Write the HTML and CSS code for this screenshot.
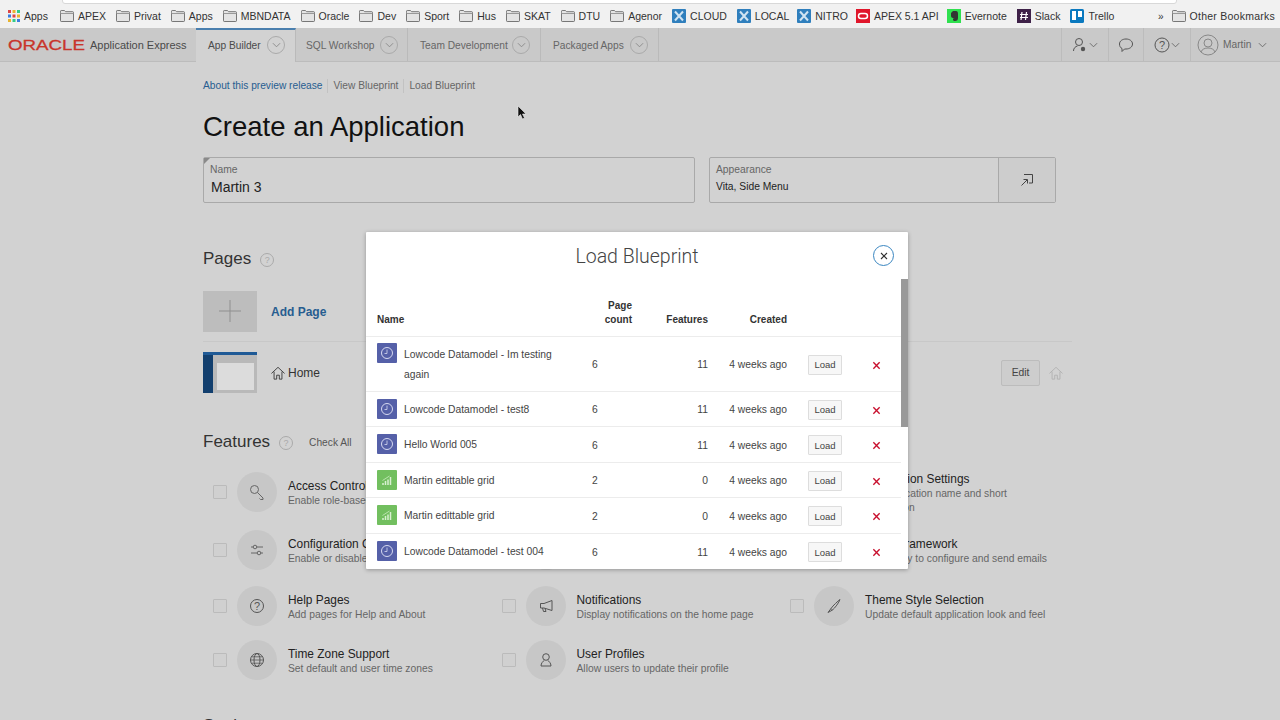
FILE: index.html
```html
<!DOCTYPE html>
<html lang="en">
<head>
<meta charset="utf-8">
<title>Create an Application</title>
<link rel="stylesheet" href="styles.css">
</head>
<body>
<svg class="defs" width="0" height="0" aria-hidden="true">
  <symbol id="folder" viewBox="0 0 14 12"><path d="M.5 2.500V1.200c0-.4.3-.7.7-.7h3.300l1 1.200h7.300c.4 0 .7.3.7.7v8.400c0 .4-.3.7-.7.7H1.200c-.4 0-.7-.3-.7-.7z" fill="#e4e4e4" stroke="#777"/><path d="M.5 3.500h13" stroke="#999"/></symbol>
  <symbol id="chev" viewBox="0 0 10 6"><path d="M1 1l4 4 4-4" fill="none" stroke="currentColor" stroke-width="1"/></symbol>
  <symbol id="home" viewBox="0 0 16 16"><path d="M.5 8.500L8 1.500l7.500 7M3.500 6.500v8.500h3v-4.500h3V15h3V6.500" fill="none" stroke="currentColor"/></symbol>
  <symbol id="x" viewBox="0 0 10 10"><path d="M1.500 1.500l7 7M8.500 1.500l-7 7" fill="none" stroke="#c8102e" stroke-width="1.500"/></symbol>
  <symbol id="clock" viewBox="0 0 20 20"><circle cx="10" cy="10" r="5.500" fill="none" stroke="#d6d9f0"/><path d="M10 6.500V10.500H7.500" fill="none" stroke="#d6d9f0" stroke-width=".8"/></symbol>
  <symbol id="bars" viewBox="0 0 20 20"><path d="M6 15v-2M8.500 15v-4M11 15V9.500M13.500 15V7" stroke="#d8f0d0" stroke-width="1.500"/><path d="M5.500 10.500l7-4.500" stroke="#d8f0d0" stroke-width=".7"/></symbol>
  <symbol id="xapp" viewBox="0 0 14 14"><rect width="14" height="14" rx="1" fill="#2f7fbd"/><path d="M3 2.500l8 9M11 2.500l-8 9" stroke="#cfe3f2" stroke-width="2"/></symbol>
</svg>

<header class="bookmarks">
  <div class="address"></div>
  <a class="bm first"><svg class="ic13" viewBox="0 0 12 12"><g><rect x="0" y="0" width="3" height="3" fill="#d44"/><rect x="4.500" y="0" width="3" height="3" fill="#e8b32e"/><rect x="9" y="0" width="3" height="3" fill="#3c8"/><rect x="0" y="4.500" width="3" height="3" fill="#3a7de0"/><rect x="4.500" y="4.500" width="3" height="3" fill="#d44"/><rect x="9" y="4.500" width="3" height="3" fill="#e8b32e"/><rect x="0" y="9" width="3" height="3" fill="#e8b32e"/><rect x="4.500" y="9" width="3" height="3" fill="#3c8"/><rect x="9" y="9" width="3" height="3" fill="#3a7de0"/></g></svg>Apps</a>
  <a class="bm f"><svg class="ic14"><use href="#folder"/></svg>APEX</a>
  <a class="bm f"><svg class="ic14"><use href="#folder"/></svg>Privat</a>
  <a class="bm f"><svg class="ic14"><use href="#folder"/></svg>Apps</a>
  <a class="bm f"><svg class="ic14"><use href="#folder"/></svg>MBNDATA</a>
  <a class="bm f"><svg class="ic14"><use href="#folder"/></svg>Oracle</a>
  <a class="bm f"><svg class="ic14"><use href="#folder"/></svg>Dev</a>
  <a class="bm f"><svg class="ic14"><use href="#folder"/></svg>Sport</a>
  <a class="bm f"><svg class="ic14"><use href="#folder"/></svg>Hus</a>
  <a class="bm f"><svg class="ic14"><use href="#folder"/></svg>SKAT</a>
  <a class="bm f"><svg class="ic14"><use href="#folder"/></svg>DTU</a>
  <a class="bm f"><svg class="ic14"><use href="#folder"/></svg>Agenor</a>
  <a class="bm"><svg class="ic14"><use href="#xapp"/></svg>CLOUD</a>
  <a class="bm tight"><svg class="ic14"><use href="#xapp"/></svg>LOCAL</a>
  <a class="bm tight"><svg class="ic14"><use href="#xapp"/></svg>NITRO</a>
  <a class="bm tight"><svg class="ic14" viewBox="0 0 14 14"><rect width="14" height="14" fill="#e0162b"/><rect x="2.500" y="4.500" width="9" height="5" rx="2.500" fill="none" stroke="#fff" stroke-width="1.500"/></svg>APEX 5.1 API</a>
  <a class="bm"><svg class="ic14" viewBox="0 0 14 14"><rect width="14" height="14" fill="#2fe04f"/><path d="M4 4l2-2h3c1.500 0 2 1 2 3v4c0 2-1 3-3 3-1 0-2-.5-2-1.500S7 9 8 9.500C6 9 4 9 4 7z" fill="#333"/></svg>Evernote</a>
  <a class="bm"><svg class="ic14" viewBox="0 0 14 14"><rect width="14" height="14" fill="#3e2148"/><path d="M5 3l-1 8M9.500 3l-1 8M3 5.500h8M3 8.500h8" stroke="#fff" stroke-width="1.200"/></svg>Slack</a>
  <a class="bm"><svg class="ic14" viewBox="0 0 14 14"><rect width="14" height="14" rx="1.500" fill="#0a79bf"/><rect x="2" y="2" width="4" height="9" fill="#fff"/><rect x="8" y="2" width="4" height="6" fill="#fff"/></svg>Trello</a>
  <span class="more">»</span>
  <a class="bm f last"><svg class="ic14"><use href="#folder"/></svg>Other Bookmarks</a>
</header>

<nav class="nav">
  <div class="brand">
    <svg class="logo" width="78" height="14" viewBox="0 0 78 14"><text x="0" y="12" textLength="77" lengthAdjust="spacingAndGlyphs" class="logo-text">ORACLE</text></svg>
    <span>Application Express</span>
  </div>
  <a class="tab active w100">App Builder<span class="tab-chev"><svg class="ic8"><use href="#chev"/></svg></span></a>
  <a class="tab w112">SQL Workshop<span class="tab-chev"><svg class="ic8"><use href="#chev"/></svg></span></a>
  <a class="tab w133">Team Development<span class="tab-chev"><svg class="ic8"><use href="#chev"/></svg></span></a>
  <a class="tab w118">Packaged Apps<span class="tab-chev"><svg class="ic8"><use href="#chev"/></svg></span></a>
  <div class="nav-right">
    <a class="nav-btn w47"><svg class="ic16" viewBox="0 0 16 16"><circle cx="7" cy="5" r="3.500" fill="none" stroke="#555"/><path d="M1.500 14c0-3 2-4.500 4-5" fill="none" stroke="#555"/><circle cx="11" cy="12" r="2.200" fill="#555"/></svg><svg class="ic8"><use href="#chev"/></svg></a>
    <a class="nav-btn w35"><svg class="ic16" viewBox="0 0 16 16"><path d="M8 2c3.600 0 6.500 2 6.500 5S11.600 12 8 12H6.500L4 14.500V11.500C2.300 10.700 1.500 9 1.500 7 1.500 4 4.400 2 8 2z" fill="none" stroke="#555"/></svg></a>
    <a class="nav-btn w47"><svg class="ic16" viewBox="0 0 16 16"><circle cx="8" cy="8" r="7" fill="none" stroke="#555"/><text x="8" y="11.500" class="qmark">?</text></svg><svg class="ic8"><use href="#chev"/></svg></a>
    <a class="nav-btn user"><svg class="avatar" viewBox="0 0 22 22"><circle cx="11" cy="11" r="10" fill="none" stroke="#888"/><circle cx="11" cy="9" r="4" fill="none" stroke="#888"/><path d="M4 18c1-3 4-4 7-4s6 1 7 4" fill="none" stroke="#888"/></svg><span>Martin</span><svg class="ic8 ml8"><use href="#chev"/></svg></a>
  </div>
</nav>

<main class="main">
  <div class="links">
    <a class="link-blue">About this preview release</a>
    <a>View Blueprint</a>
    <a>Load Blueprint</a>
  </div>
  <h1>Create an Application</h1>

  <div class="fields">
    <div class="field name-field">
      <label>Name</label>
      <div class="value">Martin 3</div>
    </div>
    <div class="field appearance">
      <div class="app-main">
        <label>Appearance</label>
        <div class="value small">Vita, Side Menu</div>
      </div>
      <button class="app-btn"><svg class="ic14" viewBox="0 0 14 14"><path d="M4 1.500h8.500v8.500H9" fill="none" stroke="#444"/><path d="M1.500 12.500L7 7M3.500 6.500H7.500V10.500" fill="none" stroke="#444"/></svg></button>
    </div>
  </div>

  <h2 class="section pages">Pages <span class="help">?</span></h2>
  <div class="page-row add">
    <div class="tile"><svg class="plus" viewBox="0 0 22 22"><path d="M11 0v22M0 11h22" stroke="#8f8f8f"/></svg></div>
    <a class="add-link">Add Page</a>
  </div>
  <div class="page-row home-row">
    <div class="thumb"><div class="thumb-top"></div><div class="thumb-side"></div><div class="thumb-body"></div></div>
    <div class="home-name"><svg class="ic14"><use href="#home"/></svg>Home</div>
    <button class="edit">Edit</button>
    <svg class="ic14 home-off"><use href="#home"/></svg>
  </div>

  <div class="features-head">
    <h2 class="section">Features <span class="help">?</span></h2>
    <a class="check-all">Check All</a>
  </div>

  <div class="features">
    <div class="feature"><span class="cb"></span><span class="circle"><svg class="ic16" viewBox="0 0 16 16"><circle cx="5.500" cy="5.500" r="4" fill="none" stroke="#666"/><path d="M8.500 8.500l5.500 5.500v1.500h-2.500l-1-1" fill="none" stroke="#666"/></svg></span><div class="ft"><b>Access Control</b><small>Enable role-based authentication</small></div></div>
    <div class="feature"><span class="cb"></span><span class="circle"></span><div class="ft"><b>Activity Reporting</b><small>Include usage reports</small></div></div>
    <div class="feature"><span class="cb"></span><span class="circle"></span><div class="ft"><b>Application Settings</b><small>Set application name and short<br>description</small></div></div>

    <div class="feature"><span class="cb"></span><span class="circle"><svg class="ic16" viewBox="0 0 16 16"><path d="M2 5h12M2 11h12" stroke="#666"/><circle cx="6" cy="5" r="1.800" fill="#c7c7c7" stroke="#666"/><circle cx="10" cy="11" r="1.800" fill="#c7c7c7" stroke="#666"/></svg></span><div class="ft"><b>Configuration Options</b><small>Enable or disable features</small></div></div>
    <div class="feature"><span class="cb"></span><span class="circle"></span><div class="ft"><b>Feedback</b><small>Provide a mechanism for feedback</small></div></div>
    <div class="feature"><span class="cb"></span><span class="circle"></span><div class="ft"><b>Email Framework</b><small>Add ability to configure and send emails</small></div></div>

    <div class="feature"><span class="cb"></span><span class="circle"><svg class="ic16" viewBox="0 0 16 16"><circle cx="8" cy="8" r="6.500" fill="none" stroke="#555"/><text x="8" y="11.500" class="qmark">?</text></svg></span><div class="ft"><b>Help Pages</b><small>Add pages for Help and About</small></div></div>
    <div class="feature"><span class="cb"></span><span class="circle"><svg class="ic16" viewBox="0 0 16 16"><path d="M14 2.500v10L6 10H2.500V5.500H6z" fill="none" stroke="#555"/><path d="M4.500 10l1 3.500H8L7 10.500" fill="none" stroke="#555"/></svg></span><div class="ft"><b>Notifications</b><small>Display notifications on the home page</small></div></div>
    <div class="feature"><span class="cb"></span><span class="circle"><svg class="ic16" viewBox="0 0 16 16"><path d="M14 1.500C12 3 7 7.500 5 10.500L6.500 12C9 10 13 4.500 14 1.500zM5 10.500L2 14.500 6.500 12" fill="none" stroke="#555"/></svg></span><div class="ft"><b>Theme Style Selection</b><small>Update default application look and feel</small></div></div>

    <div class="feature"><span class="cb"></span><span class="circle"><svg class="ic16" viewBox="0 0 16 16"><circle cx="8" cy="8" r="6.500" fill="none" stroke="#555"/><ellipse cx="8" cy="8" rx="3" ry="6.500" fill="none" stroke="#555"/><path d="M1.500 8h13M2.500 4.800h11M2.500 11.200h11" stroke="#555" stroke-width=".8"/></svg></span><div class="ft"><b>Time Zone Support</b><small>Set default and user time zones</small></div></div>
    <div class="feature"><span class="cb"></span><span class="circle"><svg class="ic16" viewBox="0 0 16 16"><circle cx="8" cy="5" r="3.300" fill="none" stroke="#555"/><path d="M3 14c0-3 2-4.500 3.500-6M13 14c0-3-2-4.500-3.500-6M3 14h10" fill="none" stroke="#555"/></svg></span><div class="ft"><b>User Profiles</b><small>Allow users to update their profile</small></div></div>
  </div>
  <h2 class="section settings">Settings</h2>
</main>

<section class="modal">
  <header class="modal-head">
    <h3>Load Blueprint</h3>
    <button class="close"><svg class="ic8" viewBox="0 0 8 8"><path d="M1 1l6 6M7 1L1 7" stroke="#333" stroke-width="1.100"/></svg></button>
  </header>
  <div class="modal-body">
    <table class="bp">
      <thead>
        <tr><th class="c-name">Name</th><th class="c-count">Page<br>count</th><th class="c-feat">Features</th><th class="c-created">Created</th><th class="c-load"></th><th class="c-del"></th></tr>
      </thead>
      <tbody>
        <tr class="tall"><td class="c-name"><div class="nm"><svg class="ico indigo"><use href="#clock"/></svg><span>Lowcode Datamodel - Im testing again</span></div></td><td class="n-count">6</td><td class="c-feat">11</td><td class="c-created">4 weeks ago</td><td class="c-load"><button class="load">Load</button></td><td class="c-del"><svg class="del"><use href="#x"/></svg></td></tr>
        <tr><td class="c-name"><div class="nm"><svg class="ico indigo"><use href="#clock"/></svg><span>Lowcode Datamodel - test8</span></div></td><td class="n-count">6</td><td class="c-feat">11</td><td class="c-created">4 weeks ago</td><td class="c-load"><button class="load">Load</button></td><td class="c-del"><svg class="del"><use href="#x"/></svg></td></tr>
        <tr><td class="c-name"><div class="nm"><svg class="ico indigo"><use href="#clock"/></svg><span>Hello World 005</span></div></td><td class="n-count">6</td><td class="c-feat">11</td><td class="c-created">4 weeks ago</td><td class="c-load"><button class="load">Load</button></td><td class="c-del"><svg class="del"><use href="#x"/></svg></td></tr>
        <tr><td class="c-name"><div class="nm"><svg class="ico green"><use href="#bars"/></svg><span>Martin edittable grid</span></div></td><td class="n-count">2</td><td class="c-feat">0</td><td class="c-created">4 weeks ago</td><td class="c-load"><button class="load">Load</button></td><td class="c-del"><svg class="del"><use href="#x"/></svg></td></tr>
        <tr><td class="c-name"><div class="nm"><svg class="ico green"><use href="#bars"/></svg><span>Martin edittable grid</span></div></td><td class="n-count">2</td><td class="c-feat">0</td><td class="c-created">4 weeks ago</td><td class="c-load"><button class="load">Load</button></td><td class="c-del"><svg class="del"><use href="#x"/></svg></td></tr>
        <tr><td class="c-name"><div class="nm"><svg class="ico indigo"><use href="#clock"/></svg><span>Lowcode Datamodel - test 004</span></div></td><td class="n-count">6</td><td class="c-feat">11</td><td class="c-created">4 weeks ago</td><td class="c-load"><button class="load">Load</button></td><td class="c-del"><svg class="del"><use href="#x"/></svg></td></tr>
      </tbody>
    </table>
    <div class="scrollbar"></div>
  </div>
</section>

<svg class="cursor" width="10" height="15" viewBox="0 0 10 15"><path d="M1 1v11l2.500-2.500L5.500 14l2-1-2-4H9z" fill="#111" stroke="#eee" stroke-width=".6"/></svg>
</body>
</html>
```
FILE: styles.css
```css
* { box-sizing: border-box; }
html, body { margin: 0; height: 720px; overflow: hidden; }
body { background: #d2d2d2; font-family: "Liberation Sans", Arial, sans-serif; color: #222; position: relative; }
a { color: inherit; text-decoration: none; }
svg { display: block; flex: none; }
.defs { position: absolute; }
.ic13 { width: 12px; height: 12px; }
.ic14 { width: 14px; height: 14px; }
.ic16 { width: 16px; height: 16px; }
.ic8 { width: 9px; height: 6px; }

/* bookmarks bar */
.bookmarks { height: 28px; background: #f1f1f1; display: flex; align-items: center; padding: 4px 5px 0 8px; font-size: 10.5px; color: #333; white-space: nowrap; position: relative; }
.address { position: absolute; left: 62px; top: -4px; width: 1115px; height: 8px; background: #fff; border: 1px solid #d8d8d8; border-radius: 3px; }
.bm { display: flex; align-items: center; gap: 4px; margin-right: 10px; }
.bm.first { margin-right: 12px; }
.bm.tight { margin-right: 8px; }
.bm.last { margin-right: 0; letter-spacing: .25px; }
.more { margin: 0 8px 0 auto; font-size: 10px; }

/* nav */
.nav { height: 34px; background: #c9c9c9; border-bottom: 1px solid #bcbcbc; display: flex; align-items: stretch; font-size: 10.2px; color: #666; white-space: nowrap; }
.brand { width: 196px; padding-left: 8px; display: flex; align-items: center; gap: 4px; color: #4a4a4a; font-size: 11px; }
.logo { overflow: visible; }
.logo-text { font: 15px "Liberation Sans", Arial, sans-serif; fill: #c8352b; stroke: #c8352b; stroke-width: .3px; }
.tab { display: flex; align-items: center; justify-content: space-between; padding: 1px 10px 0 12px; border-right: 1px solid #bababa; }
.tab.active { background: #d2d2d2; border-top: 2px solid #4a7fae; height: 34px; padding: 0 10px 2px 12px; color: #4a4a4a; border-right: 1px solid #bababa; }
.w100 { width: 100px; }
.tab.w112 { width: 112px; padding-left: 10px; padding-right: 9px; }
.w133 { width: 133px; }
.w118 { width: 118px; }
.tab-chev { width: 18px; height: 18px; flex: none; border: 1px solid #aaa; border-radius: 50%; display: flex; align-items: center; justify-content: center; color: #888; }
.nav-right { margin-left: auto; display: flex; margin-right: 4px; }
.nav-btn { display: flex; align-items: center; justify-content: center; gap: 1px; border-left: 1px solid #bcbcbc; color: #666; }
.w47 { width: 47px; }
.w35 { width: 35px; }
.user { width: 86px; justify-content: flex-start; padding-left: 6px; gap: 4px; }
.avatar { width: 22px; height: 22px; }
.ml8 { margin-left: 3px; }
.qmark { font: 11px "Liberation Sans", Arial, sans-serif; fill: #555; text-anchor: middle; }

/* main */
.main { padding: 17px 0 0 203px; width: 1072px; }
.links { display: flex; font-size: 10.2px; color: #666; line-height: 14px; }
.links a { padding-right: 5px; margin-right: 5px; border-right: 1px solid #c2c2c2; }
.links a:last-child { border-right: 0; }
.link-blue { color: #275d90; }
h1 { font-size: 27.5px; font-weight: 400; margin: 17px 0 0; line-height: 34px; color: #111; }
.fields { display: flex; gap: 14px; margin-top: 13px; height: 46px; width: 853px; }
.field { border: 1px solid #a9a9a9; border-radius: 2px; position: relative; }
.field label { display: block; font-size: 10.3px; color: #666; line-height: 12px; padding-top: 6px; }
.name-field { width: 492px; padding-left: 6px; }
.name-field::before { content: ""; position: absolute; left: 0; top: 0; border: 3px solid #8a8a8a; border-right-color: transparent; border-bottom-color: transparent; }
.value { font-size: 14px; line-height: 18px; margin: 2px 0 0 1px; color: #222; }
.value.small { font-size: 10.3px; margin: 2px 0 0; }
.appearance { flex: 1; display: flex; }
.app-main { flex: 1; padding-left: 6px; }
.app-btn { width: 57px; background: #cdcdcd; border: 0; border-left: 1px solid #a9a9a9; display: flex; align-items: center; justify-content: center; padding: 0; }
.section { font-size: 17px; font-weight: 400; margin: 0; line-height: 24px; color: #333; display: flex; align-items: center; }
.pages { margin-top: 44px; }
.help { width: 14px; height: 14px; margin-left: 9px; margin-top: 2px; border: 1px solid #aaa; border-radius: 50%; font-size: 9px; color: #aaa; display: flex; align-items: center; justify-content: center; }
.page-row { display: flex; align-items: center; }
.add { margin-top: 20px; height: 51px; border-bottom: 1px solid #c8c8c8; width: 869px; padding-bottom: 10px; }
.tile { width: 54px; height: 41px; background: #bdbdbd; display: flex; align-items: center; justify-content: center; }
.plus { width: 22px; height: 22px; }
.add-link { margin-left: 14px; padding-top: 2px; font-size: 12px; font-weight: 700; color: #275d90; }
.home-row { margin-top: 10px; height: 41px; width: 869px; }
.thumb { width: 54px; height: 41px; background: #b9b9b9; position: relative; }
.thumb-top { height: 3px; background: #1f5a96; }
.thumb-side { position: absolute; left: 0; top: 3px; bottom: 0; width: 10px; background: #123f6e; }
.thumb-body { position: absolute; left: 14px; top: 11px; right: 3px; bottom: 3px; background: #dcdcdc; }
.home-name { margin-left: 14px; display: flex; align-items: center; gap: 3px; font-size: 12px; color: #333; }
.edit { margin-left: auto; width: 39px; height: 26px; margin-right: 9px; background: #cdcdcd; border: 1px solid #bcbcbc; border-radius: 2px; font: 10.3px "Liberation Sans", Arial, sans-serif; color: #444; padding: 0; }
.home-off { color: #b0b0b0; margin-right: 9px; }
.features-head { display: flex; align-items: center; margin-top: 37px; }
.features-head .help { margin-left: 9px; }
.check-all { font-size: 10.2px; color: #555; margin-left: 16px; }
.features { display: grid; grid-template-columns: repeat(3, 288.5px); grid-template-rows: 58px 56px 54px 54px; margin: 18px 0 0 10px; }
.feature { display: flex; align-items: center; height: 40px; }
.cb { width: 14px; height: 14px; border: 1px solid #bbb; border-radius: 1px; background: #d0d0d0; flex: none; }
.circle { width: 40px; height: 40px; flex: none; border-radius: 50%; background: #c7c7c7; margin-left: 10px; display: flex; align-items: center; justify-content: center; }
.ft { margin-left: 11px; padding-top: 2px; white-space: nowrap; }
.ft b { display: block; font-weight: 400; font-size: 11.9px; line-height: 15px; color: #222; }
.ft small { display: block; font-size: 10.3px; line-height: 13.500px; color: #666; }
.settings { margin-top: 20px; }

/* modal */
.modal { position: absolute; left: 366px; top: 232px; width: 542px; height: 337px; background: #fff; box-shadow: 0 1px 4px rgba(0,0,0,.3); border-radius: 1px; display: flex; flex-direction: column; overflow: hidden; }
.modal-head { height: 47px; display: flex; align-items: center; justify-content: center; position: relative; flex: none; padding-top: 1px; }
.modal-head h3 { margin: 0; font-family: Roboto, "Liberation Sans", sans-serif; font-size: 19.500px; font-weight: 300; color: #444; }
.close { position: absolute; right: 14px; top: 13px; width: 21px; height: 21px; border-radius: 50%; border: 1px solid #3a86c0; background: #fff; display: flex; align-items: center; justify-content: center; padding: 0; }
.close .ic8 { width: 8px; height: 8px; }
.modal-body { position: relative; flex: 1; overflow: hidden; }
.scrollbar { position: absolute; right: 0; top: 0; width: 7px; height: 148px; background: #999; }
.bp { width: 535px; border-collapse: collapse; table-layout: fixed; font-size: 10.3px; color: #444; }
.bp th { height: 57px; vertical-align: bottom; font-size: 10px; font-weight: 700; color: #333; line-height: 14px; padding: 0 0 9px; border-bottom: 1px solid #ececec; }
.bp td { height: 35.500px; padding: 2px 0 0; border-bottom: 1px solid #ececec; vertical-align: middle; }
.bp tr.tall td { height: 55px; }
.bp tr:last-child td { border-bottom: 0; }
th.c-name, td.c-name { width: 205px; text-align: left; }
.bp .c-name { padding-left: 11px; }
.bp td.c-name { padding-top: 0; }
th.c-count { width: 61px; text-align: right; }
.bp .n-count { text-align: left; padding-left: 21px; width: 61px; }
.bp .c-feat { width: 76px; text-align: right; }
.bp .c-created { width: 79px; text-align: right; }
.bp .c-load { width: 55px; padding-left: 21px; }
.bp .c-del { width: 59px; padding-left: 30px; }
.nm { display: flex; align-items: center; line-height: 20px; }
.nm span { margin-left: 7px; width: 165px; padding-top: 2px; }
.tall .nm { align-items: flex-start; }
.tall .nm span { padding-top: 2px; }
.ico { width: 20px; height: 20px; border-radius: 1px; }
.indigo { background: #5560a8; }
.green { background: #72bf5f; }
.load { width: 34px; height: 20px; background: #f7f7f7; border: 1px solid #ddd; border-radius: 1px; font: 9.500px "Liberation Sans", Arial, sans-serif; color: #444; padding: 0; display: block; }
.del { width: 9px; height: 9px; margin-top: 1px; }

.cursor { position: absolute; left: 517px; top: 105px; }
```
